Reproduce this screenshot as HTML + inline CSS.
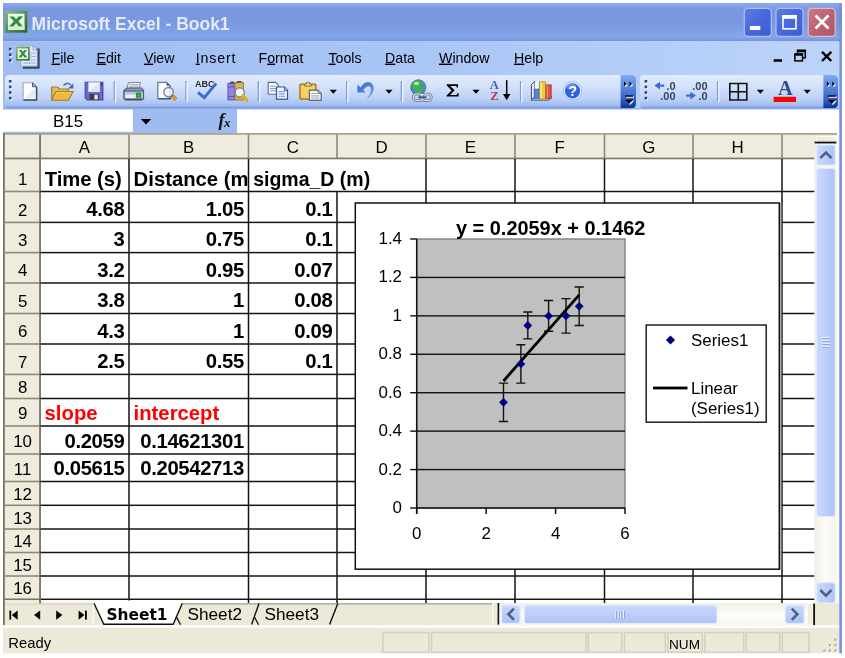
<!DOCTYPE html>
<html><head><meta charset="utf-8"><title>Microsoft Excel - Book1</title>
<style>
html,body{margin:0;padding:0;background:#fff;}
body{width:845px;height:658px;overflow:hidden;position:relative;}
svg{position:absolute;left:0;top:0;display:block;}
text{font-family:"Liberation Sans",Arial,sans-serif;}
.b{font-weight:bold;}
.dv{font-family:"DejaVu Sans Condensed","DejaVu Sans","Liberation Sans",sans-serif;}
</style></head><body>
<svg width="845" height="658" viewBox="0 0 845 658">
<defs>
<filter id="soft" filterUnits="userSpaceOnUse" x="0" y="0" width="845" height="658" color-interpolation-filters="sRGB"><feGaussianBlur stdDeviation="0.45"/></filter>
<linearGradient id="gTitle" x1="0" y1="0" x2="0" y2="1">
<stop offset="0" stop-color="#8aabea"/><stop offset="0.06" stop-color="#86a6e8"/><stop offset="0.15" stop-color="#7b98df"/><stop offset="0.5" stop-color="#7a97df"/><stop offset="0.66" stop-color="#7d9ee3"/><stop offset="0.88" stop-color="#82a9e9"/><stop offset="0.935" stop-color="#7d9ce3"/><stop offset="1" stop-color="#7a8fdc"/>
</linearGradient>
<linearGradient id="gMenu" x1="0" y1="0" x2="1" y2="0">
<stop offset="0" stop-color="#a0bdf2"/><stop offset="0.5" stop-color="#aac6f6"/><stop offset="0.75" stop-color="#b3cdf8"/><stop offset="1" stop-color="#bdd4f9"/>
</linearGradient>
<linearGradient id="gTb" x1="0" y1="0" x2="0" y2="1">
<stop offset="0" stop-color="#e1ebfc"/><stop offset="0.35" stop-color="#d3e1fa"/><stop offset="0.7" stop-color="#bdd2f6"/><stop offset="0.9" stop-color="#a2bdf0"/><stop offset="0.95" stop-color="#8eabe8"/><stop offset="1" stop-color="#5f82d4"/>
</linearGradient>
<linearGradient id="gOv" x1="0" y1="0" x2="0" y2="1">
<stop offset="0" stop-color="#7eaaee"/><stop offset="0.4" stop-color="#5583da"/><stop offset="0.75" stop-color="#2f5cc0"/><stop offset="0.95" stop-color="#0d3aa0"/><stop offset="1" stop-color="#0a2a8c"/>
</linearGradient>
<linearGradient id="gBtn" x1="0" y1="0" x2="1" y2="1">
<stop offset="0" stop-color="#5d7de6"/><stop offset="0.5" stop-color="#4868dc"/><stop offset="1" stop-color="#3c5cd2"/>
</linearGradient>
<linearGradient id="gCls" x1="0" y1="0" x2="1" y2="1">
<stop offset="0" stop-color="#c87a8c"/><stop offset="0.5" stop-color="#bb6476"/><stop offset="1" stop-color="#ae5668"/>
</linearGradient>
<linearGradient id="gSbV" x1="0" y1="0" x2="1" y2="0">
<stop offset="0" stop-color="#c9d8fb"/><stop offset="0.5" stop-color="#bccefa"/><stop offset="1" stop-color="#aec2f6"/>
</linearGradient>
<linearGradient id="gSbH" x1="0" y1="0" x2="0" y2="1">
<stop offset="0" stop-color="#c9d8fb"/><stop offset="0.5" stop-color="#bccefa"/><stop offset="1" stop-color="#aec2f6"/>
</linearGradient>
<linearGradient id="gTrV" x1="0" y1="0" x2="1" y2="0">
<stop offset="0" stop-color="#f0efe6"/><stop offset="0.5" stop-color="#fcfcf9"/><stop offset="1" stop-color="#f6f5ee"/>
</linearGradient>
<linearGradient id="gTrH" x1="0" y1="0" x2="0" y2="1">
<stop offset="0" stop-color="#f0efe6"/><stop offset="0.5" stop-color="#fcfcf9"/><stop offset="1" stop-color="#f6f5ee"/>
</linearGradient>
</defs>

<g filter="url(#soft)">
<rect x="0" y="0" width="845" height="658" fill="#fff"/>
<rect x="3" y="3" width="839" height="38.5" fill="url(#gTitle)"/>
<rect x="838.8" y="3" width="3.2" height="38.5" fill="#7585dc" opacity="0.55"/>
<linearGradient id="gIco" x1="0" y1="0" x2="1" y2="1"><stop offset="0" stop-color="#8cc07a"/><stop offset="0.5" stop-color="#4f9348"/><stop offset="1" stop-color="#2a6428"/></linearGradient>
<g transform="translate(5.2,10.9)"><rect x="0" y="0" width="22.1" height="21.8" fill="url(#gIco)"/><rect x="2.8" y="2.8" width="16.5" height="16.2" fill="#eff6ec"/><rect x="2.8" y="14.5" width="16.5" height="4.5" fill="#dcecd6"/><path d="M4.2 5.6 L8.6 5.6 L11 8.4 L13.6 5.6 L17.8 5.6 L13.2 10.4 L17.6 15.4 L13.2 15.4 L10.8 12.4 L8.2 15.4 L4.2 15.4 L8.6 10.4 Z" fill="#2f9440"/><path d="M13.6 5.6 L17.8 5.6 L4.2 15.4 L8.2 15.4 Z" fill="#1f7a30" opacity="0.55"/></g>
<text x="31.6" y="29.6" font-size="17.6" class="b" fill="#e3ebfc" textLength="198" lengthAdjust="spacingAndGlyphs">Microsoft Excel - Book1</text>
<rect x="744.3" y="8.3" width="27" height="28" rx="3.5" fill="url(#gBtn)" stroke="#a9bdf3" stroke-width="1.3"/>
<rect x="776" y="8.3" width="27" height="28" rx="3.5" fill="url(#gBtn)" stroke="#a9bdf3" stroke-width="1.3"/>
<rect x="808.2" y="8.3" width="27" height="28" rx="3.5" fill="url(#gCls)" stroke="#e0b9c4" stroke-width="1.3"/>
<rect x="749.8" y="26" width="10.5" height="4" fill="#fff"/>
<rect x="783" y="15.8" width="13" height="13" fill="none" stroke="#fff" stroke-width="1.6"/><rect x="782.2" y="15" width="14.6" height="3.8" fill="#fff"/>
<path d="M815.5 15.5 L828.5 28.5 M828.5 15.5 L815.5 28.5" stroke="#fff" stroke-width="2.6" stroke-linecap="butt"/>
<rect x="3" y="41.5" width="836.5" height="33.5" fill="url(#gMenu)"/>
<rect x="9.9" y="48.8" width="2.6" height="2.6" fill="#f4f8ff"/><rect x="8.9" y="47.8" width="2.6" height="2.6" fill="#2c418c"/>
<rect x="9.9" y="54.4" width="2.6" height="2.6" fill="#f4f8ff"/><rect x="8.9" y="53.4" width="2.6" height="2.6" fill="#2c418c"/>
<rect x="9.9" y="60.1" width="2.6" height="2.6" fill="#f4f8ff"/><rect x="8.9" y="59.1" width="2.6" height="2.6" fill="#2c418c"/>
<g><path d="M23 48.5 H39.7 V68.8 H23 Z" fill="#3b4a68"/><path d="M20.8 45.8 H33.2 L37.2 49.8 V66.2 H20.8 Z" fill="#dfe9f9" stroke="#8ea2c8" stroke-width="0.8"/><path d="M33.2 45.8 V49.8 H37.2 Z" fill="#f7faff" stroke="#7b8eb4" stroke-width="0.8"/><path d="M30.5 53 h5 M30.5 56.5 h5 M30.5 60 h5 M23.5 63.2 h12" stroke="#9db4e0" stroke-width="1.2"/><path d="M31 52 V64" stroke="#b9caea" stroke-width="1"/><rect x="16" y="46.8" width="13.7" height="13.8" fill="url(#gIco)"/><rect x="17.6" y="48.4" width="10.5" height="10.6" fill="#eaf4e6"/><path d="M18.8 50 L21.6 50 L22.9 51.9 L24.4 50 L27.2 50 L24.3 53.5 L27.3 57.4 L24.4 57.4 L22.9 55.3 L21.4 57.4 L18.6 57.4 L21.5 53.5 Z" fill="#2f9440"/></g>
<text x="51.5" y="62.6" font-size="14.2" fill="#000"><tspan text-decoration="underline">F</tspan>ile</text>
<text x="96.5" y="62.6" font-size="14.2" fill="#000"><tspan text-decoration="underline">E</tspan>dit</text>
<text x="144" y="62.6" font-size="14.2" fill="#000"><tspan text-decoration="underline">V</tspan>iew</text>
<text x="195.8" y="62.6" font-size="14.2" fill="#000" textLength="39.6" lengthAdjust="spacing"><tspan text-decoration="underline">I</tspan>nsert</text>
<text x="258.5" y="62.6" font-size="14.2" fill="#000">F<tspan text-decoration="underline">o</tspan>rmat</text>
<text x="328.5" y="62.6" font-size="14.2" fill="#000"><tspan text-decoration="underline">T</tspan>ools</text>
<text x="385" y="62.6" font-size="14.2" fill="#000"><tspan text-decoration="underline">D</tspan>ata</text>
<text x="439" y="62.6" font-size="14.2" fill="#000"><tspan text-decoration="underline">W</tspan>indow</text>
<text x="514" y="62.6" font-size="14.2" fill="#000"><tspan text-decoration="underline">H</tspan>elp</text>
<rect x="773.7" y="59.2" width="8.3" height="2.6" fill="#000"/>
<path d="M797.5 53 V50.3 H805.3 V57.8 H802.5" fill="none" stroke="#000" stroke-width="1.5"/><rect x="794.9" y="53.9" width="7.6" height="7" fill="none" stroke="#000" stroke-width="1.5"/><path d="M797 51.2H805.3M794.5 54.7H802.6" stroke="#000" stroke-width="2"/>
<path d="M822 51.8 L831.3 61 M831.3 51.8 L822 61" stroke="#000" stroke-width="2.4"/>
<rect x="3" y="75" width="836.5" height="34" fill="#a9c2f2"/>
<rect x="3" y="75" width="836.5" height="34" fill="url(#gMenu)"/>
<path d="M9 75 H621 V108.6 H9 Q5 108.6 5 104 V79 Q5 75 9 75 Z" fill="url(#gTb)"/>
<path d="M620.6 75 H631 Q636 75 636 80 V103.6 Q636 108.6 631 108.6 H620.6 Z" fill="url(#gOv)"/>
<path d="M644 75 H824 V108.6 H644 Q640 108.6 640 104 V79 Q640 75 644 75 Z" fill="url(#gTb)"/>
<path d="M823.4 75 H833 Q838 75 838 80 V103.6 Q838 108.6 833 108.6 H823.4 Z" fill="url(#gOv)"/>
<rect x="9.9" y="81.0" width="2.6" height="2.6" fill="#f4f8ff"/><rect x="8.9" y="80.0" width="2.6" height="2.6" fill="#2c418c"/>
<rect x="9.9" y="86.6" width="2.6" height="2.6" fill="#f4f8ff"/><rect x="8.9" y="85.6" width="2.6" height="2.6" fill="#2c418c"/>
<rect x="9.9" y="92.2" width="2.6" height="2.6" fill="#f4f8ff"/><rect x="8.9" y="91.2" width="2.6" height="2.6" fill="#2c418c"/>
<rect x="9.9" y="97.8" width="2.6" height="2.6" fill="#f4f8ff"/><rect x="8.9" y="96.8" width="2.6" height="2.6" fill="#2c418c"/>
<rect x="645.6" y="81.0" width="2.6" height="2.6" fill="#f4f8ff"/><rect x="644.6" y="80.0" width="2.6" height="2.6" fill="#2c418c"/>
<rect x="645.6" y="86.6" width="2.6" height="2.6" fill="#f4f8ff"/><rect x="644.6" y="85.6" width="2.6" height="2.6" fill="#2c418c"/>
<rect x="645.6" y="92.2" width="2.6" height="2.6" fill="#f4f8ff"/><rect x="644.6" y="91.2" width="2.6" height="2.6" fill="#2c418c"/>
<rect x="645.6" y="97.8" width="2.6" height="2.6" fill="#f4f8ff"/><rect x="644.6" y="96.8" width="2.6" height="2.6" fill="#2c418c"/>
<path d="M625 82.5 l2.7 2.4 l-2.7 2.4 z M630.4 82.5 l2.7 2.4 l-2.7 2.4 z" fill="#fff"/>
<rect x="626" y="96.4" width="8" height="1.3" fill="#fff"/><path d="M626 100.8 h8 l-4 4.3 z" fill="#fff"/>
<path d="M624 81.5 l2.7 2.4 l-2.7 2.4 z M629.4 81.5 l2.7 2.4 l-2.7 2.4 z" fill="#000"/>
<rect x="625" y="95.4" width="8" height="1.3" fill="#000"/><path d="M625 99.8 h8 l-4 4.3 z" fill="#000"/>
<path d="M827.8 82.5 l2.7 2.4 l-2.7 2.4 z M833.1999999999999 82.5 l2.7 2.4 l-2.7 2.4 z" fill="#fff"/>
<rect x="828.8" y="96.4" width="8" height="1.3" fill="#fff"/><path d="M828.8 100.8 h8 l-4 4.3 z" fill="#fff"/>
<path d="M826.8 81.5 l2.7 2.4 l-2.7 2.4 z M832.1999999999999 81.5 l2.7 2.4 l-2.7 2.4 z" fill="#000"/>
<rect x="827.8" y="95.4" width="8" height="1.3" fill="#000"/><path d="M827.8 99.8 h8 l-4 4.3 z" fill="#000"/>
<rect x="113.6" y="81" width="1.3" height="20.5" fill="#7c9be0"/><rect x="114.89999999999999" y="82" width="1.2" height="20.5" fill="#f4f8fe"/>
<rect x="185.3" y="81" width="1.3" height="20.5" fill="#7c9be0"/><rect x="186.6" y="82" width="1.2" height="20.5" fill="#f4f8fe"/>
<rect x="257.7" y="81" width="1.3" height="20.5" fill="#7c9be0"/><rect x="259.0" y="82" width="1.2" height="20.5" fill="#f4f8fe"/>
<rect x="346.0" y="81" width="1.3" height="20.5" fill="#7c9be0"/><rect x="347.3" y="82" width="1.2" height="20.5" fill="#f4f8fe"/>
<rect x="400.7" y="81" width="1.3" height="20.5" fill="#7c9be0"/><rect x="402.0" y="82" width="1.2" height="20.5" fill="#f4f8fe"/>
<rect x="519.9" y="81" width="1.3" height="20.5" fill="#7c9be0"/><rect x="521.2" y="82" width="1.2" height="20.5" fill="#f4f8fe"/>
<rect x="716.9" y="81" width="1.3" height="20.5" fill="#7c9be0"/><rect x="718.2" y="82" width="1.2" height="20.5" fill="#f4f8fe"/>
<path d="M329.7 89.7 h7.2 l-3.6 4 z" fill="#000"/>
<path d="M385.4 89.7 h7.2 l-3.6 4 z" fill="#000"/>
<path d="M472.4 89.7 h7.2 l-3.6 4 z" fill="#000"/>
<path d="M756.8 89.7 h7.2 l-3.6 4 z" fill="#000"/>
<path d="M803.6 89.7 h7.2 l-3.6 4 z" fill="#000"/>
<g transform="translate(22.3,82)"><path d="M0.8 0.8 H10.2 L14.2 4.8 V17.8 H0.8 Z" fill="#fdfdff" stroke="#9aa8c4" stroke-width="1.1"/><path d="M14.3 5 V18 H1.2" fill="none" stroke="#3b4a6e" stroke-width="1.5"/><path d="M10.2 0.8 V4.8 H14.2 Z" fill="#b9c6e0" stroke="#4a5a80" stroke-width="1"/><path d="M3 15.5 L12.5 6 V16 H3Z" fill="#dfe5f2" opacity="0.8"/></g>
<g transform="translate(51,81)"><path d="M0.8 6 H6.5 L8.5 8 H17.5 V19 H0.8 Z" fill="#e9bb55" stroke="#9a7a3a" stroke-width="1.2"/><path d="M0.8 19 L5 10.5 H22 L17.5 19 Z" fill="#f7cf5e" stroke="#a07c30" stroke-width="1.2"/><path d="M2.5 18.2 L6 12 H20 L17 18.2 Z" fill="#f2b936"/><path d="M12.5 4.5 Q16 0.5 20 4" fill="none" stroke="#5c78b0" stroke-width="1.6"/><path d="M22.3 2.2 V7.6 H17 Z" fill="#4a68a8"/></g>
<g transform="translate(84.6,81.7)"><path d="M0.6 0.6 H18.3 V18.3 H2.6 L0.6 16.3 Z" fill="#6b67d4" stroke="#4541a4" stroke-width="1.1"/><rect x="3.8" y="0.6" width="11.5" height="9.6" fill="#f4f6fb"/><path d="M3.8 10.2 L15.3 0.6 V10.2 Z" fill="#d5dbea" opacity="0.7"/><rect x="5" y="12.2" width="9.5" height="6" fill="#3a3a4c"/><rect x="9.8" y="13" width="3.4" height="4.6" fill="#e8e8f0"/><rect x="16.3" y="1.8" width="1.2" height="1.8" fill="#26235f"/></g>
<g transform="translate(123,81.5)"><path d="M5.5 1 H17.5 L15.5 8 H3.5 Z" fill="#f4f6fb" stroke="#7c879c" stroke-width="1"/><path d="M6.5 3.2 H15.6 M5.8 5.4 H15" stroke="#8d97ab" stroke-width="1"/><path d="M1 9 L4 6.5 H18.5 L20.5 9 V17 H1 Z" fill="#8f9cb5" stroke="#4d5a74" stroke-width="1.1"/><rect x="1" y="9.5" width="19.5" height="8" fill="#b9c3d6" stroke="#4d5a74" stroke-width="1.1"/><rect x="2.5" y="13" width="10" height="3.6" fill="#eef1f7"/><rect x="13.6" y="11.6" width="4" height="4" fill="#18c834" stroke="#0b7a1c" stroke-width="0.8"/><path d="M2 18.3 H19.5" stroke="#3f4a62" stroke-width="1.4"/></g>
<g transform="translate(157,81.5)"><path d="M0.8 0.8 H9.5 L13 4.3 V17 H0.8 Z" fill="#fbfcfe" stroke="#66759a" stroke-width="1.2"/><path d="M13.2 5 V17.4 H1.2" fill="none" stroke="#3b4a6e" stroke-width="1.3"/><path d="M9.5 0.8 V4.3 H13 Z" fill="#4a5c8a"/><circle cx="11.6" cy="10.6" r="4.7" fill="#eef4fc" fill-opacity="0.92" stroke="#7e8797" stroke-width="1.5"/><path d="M14.6 13.8 L16 15.2" stroke="#6c6f78" stroke-width="2.2"/><path d="M17.2 13.6 L20 16.6 L17.6 19.4 L14.6 16.4 Z" fill="#e79a2b" stroke="#b87514" stroke-width="0.6"/></g>
<text x="195" y="87" font-size="8.6" font-weight="bold" fill="#2b2b2b" textLength="19.5" lengthAdjust="spacingAndGlyphs">ABC</text>
<path d="M198 92.3 L204.3 97.6 L216.2 83.4" fill="none" stroke="#3c6bd9" stroke-width="3" stroke-linejoin="miter"/>
<g transform="translate(227.3,81)"><rect x="0.6" y="2.5" width="6.8" height="16.5" fill="#8f84e4" stroke="#5d52b5" stroke-width="0.9"/><path d="M0.6 6h6.8M0.6 15.5h6.8" stroke="#5d52b5" stroke-width="1"/><path d="M1.5 2.5 L3.5 0.6 H6.4 L7.4 2.5" fill="#4e4e62"/><rect x="7.6" y="1.6" width="8.6" height="17.4" fill="#dbb548" stroke="#9a7c2a" stroke-width="0.9"/><path d="M8.4 1.6 L10 0 H13.5 L15.5 1.6" fill="#4e4e62"/><circle cx="12.4" cy="11.4" r="4.6" fill="#eef4fc" stroke="#7e8797" stroke-width="1.4"/><path d="M15.6 14.8 L19.6 19.4" stroke="#e3ab2e" stroke-width="3.4" stroke-linecap="round"/></g>
<g transform="translate(267.5,81.7)"><path d="M0.7 0.7 H8 L11 3.7 V12.5 H0.7 Z" fill="#fafcff" stroke="#5a6a8e" stroke-width="1.1"/><path d="M2.6 4.5h5.5M2.6 6.8h6.5M2.6 9.1h6.5" stroke="#7d95c8" stroke-width="1.1"/><path d="M9 5.3 H16.8 L20 8.5 V17.4 H9 Z" fill="#fafcff" stroke="#2f4f9a" stroke-width="1.2"/><path d="M16.8 5.3 V8.5 H20" fill="#c5d3ee" stroke="#2f4f9a" stroke-width="1"/><path d="M11 10h6.8M11 12.3h6.8M11 14.6h6.8" stroke="#6c89c8" stroke-width="1.1"/></g>
<g transform="translate(299.2,81.5)"><rect x="0.7" y="2.6" width="16" height="15" rx="1" fill="#f0bf3e" stroke="#9a6f22" stroke-width="1.2"/><rect x="2.2" y="4.2" width="13" height="12" fill="#f6d162"/><path d="M5.4 4.6 V2.6 H7.4 V0.8 H10.4 V2.6 H12.4 V4.6 Z" fill="#e8dca0" stroke="#8a6a28" stroke-width="0.9"/><path d="M10.2 8.7 H18.8 L22 11.9 V18.8 H10.2 Z" fill="#f4f6fa" stroke="#5e6470" stroke-width="1.2"/><path d="M12 12h5.6M12 14.4h8.2M12 16.6h8.2" stroke="#9aa3b5" stroke-width="1"/><path d="M18.8 8.7 V11.9 H22" fill="#cfd5e2" stroke="#5e6470" stroke-width="0.9"/></g>
<linearGradient id="gUndo" x1="0" y1="0" x2="1" y2="1"><stop offset="0" stop-color="#3468d6"/><stop offset="0.6" stop-color="#5486e4"/><stop offset="1" stop-color="#9ab8f0"/></linearGradient>
<path d="M357.4 84.6 L357.4 92.6 L365.8 92.6 L363.4 90.2 Q365.6 86.6 368.8 86.3 Q371.2 86.8 371 90 Q370.4 94.6 366.4 99.3 Q373.6 94.6 373.8 88.6 Q373.4 82.2 368 81.9 Q363.6 82.3 360.6 87.6 Z" fill="url(#gUndo)"/>
<g><circle cx="418.3" cy="87.4" r="7.6" fill="#4a82de" stroke="#3a64b4" stroke-width="0.8"/><path d="M412 84.6 Q413.6 81 418 80.2 Q422.6 80.4 423 83 Q420.6 84.6 420.4 87 Q422.6 89.4 421.4 92.6 Q418.6 95 416 93.4 Q415.6 90 413 89 Q411.4 87 412 84.6Z" fill="#3bb54a"/><path d="M423.6 84.4 Q426 86.6 425.6 90.6 Q424.4 92 423.4 90 Q423 87 423.6 84.4Z" fill="#3bb54a"/><ellipse cx="416.4" cy="83.4" rx="2.6" ry="1.7" fill="#d8f7d4" opacity="0.85"/><rect x="413.1" y="94" width="10" height="6.6" rx="3.3" fill="none" stroke="#68748e" stroke-width="2.6"/><rect x="421.4" y="94" width="10" height="6.6" rx="3.3" fill="none" stroke="#68748e" stroke-width="2.6"/><rect x="413.1" y="94" width="10" height="6.6" rx="3.3" fill="none" stroke="#f2f5fa" stroke-width="1"/><rect x="421.4" y="94" width="10" height="6.6" rx="3.3" fill="none" stroke="#f2f5fa" stroke-width="1"/><path d="M418.4 97.3 H426.4" stroke="#4d586e" stroke-width="2"/></g>
<path d="M446.6 84.2 H458 V87.4 H456.8 L456.3 85.9 H450.2 L454.6 90.3 L450 95 H456.6 L457.4 93.2 H458.6 V96.6 H446.6 V95.6 L451.6 90.4 L446.6 85.3 Z" fill="#000"/>
<text x="494.4" y="89.4" font-size="12.6" font-weight="bold" text-anchor="middle" fill="#3c62bc" style="font-family:'Liberation Serif',serif">A</text>
<text x="494.4" y="100.4" font-size="12.6" font-weight="bold" text-anchor="middle" fill="#b03c4c" style="font-family:'Liberation Serif',serif">Z</text>
<path d="M506.7 80.2 V97" stroke="#000" stroke-width="1.5"/><path d="M503 94 H510.4 L506.7 100.2 Z" fill="#000"/>
<g transform="translate(530.4,80.5)"><path d="M1 4 L4.5 0.8 V16 L1 19.6 Z" fill="#e6ebf5" stroke="#3b4a78" stroke-width="1"/><path d="M4.5 1 H8 V16 H4.5Z" fill="#f5f7fb"/><path d="M1 19.6 L4.5 16.2 H21 L18.5 19.6 Z" fill="#eef1f7" stroke="#3b4a78" stroke-width="1"/><rect x="3.8" y="8.6" width="4.8" height="9.4" fill="#4f86e2" stroke="#2f5cb4" stroke-width="0.7"/><rect x="9.2" y="1.4" width="6" height="17" fill="#f0cc3a" stroke="#a8861c" stroke-width="0.7"/><rect x="15.6" y="4.4" width="5.2" height="13.8" fill="#e0523a" stroke="#9a2c1c" stroke-width="0.7"/><rect x="10" y="2" width="1.6" height="15.6" fill="#fbeea0" opacity="0.8"/><rect x="16.2" y="5" width="1.4" height="12.6" fill="#f29a88" opacity="0.8"/></g>
<circle cx="572.5" cy="90.8" r="9.2" fill="#e9f0fd" stroke="#9cb6ee" stroke-width="0.9"/><circle cx="572.5" cy="90.8" r="7.6" fill="#2c62e4"/><ellipse cx="571.5" cy="86.6" rx="5" ry="3" fill="#6d9af2" opacity="0.75"/><text x="572.6" y="96.2" font-size="14.5" font-weight="bold" text-anchor="middle" fill="#fff">?</text>
<text x="675.6" y="89.6" font-size="11" font-weight="bold" text-anchor="end" fill="#36425e">.0</text>
<text x="675.6" y="99.6" font-size="11" font-weight="bold" text-anchor="end" fill="#36425e">.00</text>
<path d="M654.4 85.6 L660 81.8 V84.6 H664.2 V86.8 H660 V89.6 Z" fill="#3b6bd4"/>
<text x="707.6" y="89.6" font-size="11" font-weight="bold" text-anchor="end" fill="#36425e">.00</text>
<text x="707.6" y="99.6" font-size="11" font-weight="bold" text-anchor="end" fill="#36425e">.0</text>
<path d="M696 95.6 L690.4 91.8 V94.6 H686.2 V96.8 H690.4 V99.6 Z" fill="#3b6bd4"/>
<path d="M729.8 83.5 H746.8 V100 H729.8 Z M738.3 83.5 V100 M729.8 91.75 H746.8" fill="none" stroke="#111" stroke-width="1.6"/>
<text x="785.4" y="95.2" font-size="20.5" font-weight="bold" text-anchor="middle" fill="#2d4d8e" style="font-family:'Liberation Serif',serif">A</text>
<rect x="773.6" y="96.8" width="22.4" height="5.2" fill="#ff0000"/>
<rect x="3" y="108.6" width="836.5" height="25" fill="#fff"/>
<rect x="3" y="108.2" width="836.5" height="1.2" fill="#86a4e4"/>
<rect x="133" y="109" width="104" height="23.5" fill="#9fbbf0"/>
<rect x="3" y="131.8" width="234" height="1.6" fill="#9fbbf0"/>
<text x="53" y="126.8" font-size="16.9" fill="#000">B15</text>
<path d="M140.8 118.9 h10.4 l-5.2 5.5 z" fill="#000"/>
<text x="218.6" y="126.4" font-size="18" fill="#111" font-style="italic" font-weight="bold" style="font-family:'Liberation Serif',serif">f<tspan font-size="13" dy="0.6" dx="-0.6">x</tspan></text>
<rect x="3" y="133.2" width="812" height="25.3" fill="#efebde"/>
<rect x="3" y="133.2" width="37" height="468" fill="#efebde"/>
<rect x="40" y="158.5" width="775" height="442.5" fill="#fff"/>
<rect x="3" y="133" width="812" height="1.8" fill="#a9a68f"/>
<rect x="3" y="133" width="1.8" height="468" fill="#77755f"/>
<rect x="128.2" y="134.5" width="1.6" height="24" fill="#8d8a73"/>
<rect x="247.7" y="134.5" width="1.6" height="24" fill="#8d8a73"/>
<rect x="336.2" y="134.5" width="1.6" height="24" fill="#8d8a73"/>
<rect x="425.2" y="134.5" width="1.6" height="24" fill="#8d8a73"/>
<rect x="514.2" y="134.5" width="1.6" height="24" fill="#8d8a73"/>
<rect x="603.7" y="134.5" width="1.6" height="24" fill="#8d8a73"/>
<rect x="692.2" y="134.5" width="1.6" height="24" fill="#8d8a73"/>
<rect x="781.2" y="134.5" width="1.6" height="24" fill="#8d8a73"/>
<rect x="4.5" y="190.7" width="35.5" height="1.6" fill="#8d8a73"/>
<rect x="4.5" y="221.6" width="35.5" height="1.6" fill="#8d8a73"/>
<rect x="4.5" y="251.79999999999998" width="35.5" height="1.6" fill="#8d8a73"/>
<rect x="4.5" y="282.2" width="35.5" height="1.6" fill="#8d8a73"/>
<rect x="4.5" y="312.7" width="35.5" height="1.6" fill="#8d8a73"/>
<rect x="4.5" y="343.2" width="35.5" height="1.6" fill="#8d8a73"/>
<rect x="4.5" y="373.59999999999997" width="35.5" height="1.6" fill="#8d8a73"/>
<rect x="4.5" y="397.7" width="35.5" height="1.6" fill="#8d8a73"/>
<rect x="4.5" y="425.2" width="35.5" height="1.6" fill="#8d8a73"/>
<rect x="4.5" y="453.2" width="35.5" height="1.6" fill="#8d8a73"/>
<rect x="4.5" y="480.7" width="35.5" height="1.6" fill="#8d8a73"/>
<rect x="4.5" y="504.5" width="35.5" height="1.6" fill="#8d8a73"/>
<rect x="4.5" y="528.2" width="35.5" height="1.6" fill="#8d8a73"/>
<rect x="4.5" y="551.7" width="35.5" height="1.6" fill="#8d8a73"/>
<rect x="4.5" y="575.2" width="35.5" height="1.6" fill="#8d8a73"/>
<rect x="4.5" y="598.5" width="35.5" height="1.6" fill="#77755f"/>
<rect x="39.2" y="134.5" width="1.7" height="466" fill="#6f6d58"/>
<rect x="4.5" y="157.6" width="810" height="1.7" fill="#7d7b65"/>
<rect x="40.5" y="190.75" width="774" height="1.5" fill="#141414"/>
<rect x="40.5" y="221.65" width="774" height="1.5" fill="#141414"/>
<rect x="40.5" y="251.85" width="774" height="1.5" fill="#141414"/>
<rect x="40.5" y="282.25" width="774" height="1.5" fill="#141414"/>
<rect x="40.5" y="312.75" width="774" height="1.5" fill="#141414"/>
<rect x="40.5" y="343.25" width="774" height="1.5" fill="#141414"/>
<rect x="40.5" y="373.65" width="774" height="1.5" fill="#141414"/>
<rect x="40.5" y="397.75" width="774" height="1.5" fill="#141414"/>
<rect x="40.5" y="425.25" width="774" height="1.5" fill="#141414"/>
<rect x="40.5" y="453.25" width="774" height="1.5" fill="#141414"/>
<rect x="40.5" y="480.75" width="774" height="1.5" fill="#141414"/>
<rect x="40.5" y="504.55" width="774" height="1.5" fill="#141414"/>
<rect x="40.5" y="528.25" width="774" height="1.5" fill="#141414"/>
<rect x="40.5" y="551.75" width="774" height="1.5" fill="#141414"/>
<rect x="40.5" y="575.25" width="774" height="1.5" fill="#141414"/>
<rect x="40.5" y="598.55" width="774" height="1.5" fill="#141414"/>
<rect x="128.25" y="159" width="1.5" height="444" fill="#141414"/>
<rect x="247.75" y="159" width="1.5" height="444" fill="#141414"/>
<rect x="336.25" y="191.5" width="1.5" height="411.5" fill="#141414"/>
<rect x="425.25" y="159" width="1.5" height="444" fill="#141414"/>
<rect x="514.25" y="159" width="1.5" height="444" fill="#141414"/>
<rect x="603.75" y="159" width="1.5" height="444" fill="#141414"/>
<rect x="692.25" y="159" width="1.5" height="444" fill="#141414"/>
<rect x="781.25" y="159" width="1.5" height="444" fill="#141414"/>
<text x="84.5" y="153" font-size="16.9" text-anchor="middle" fill="#000">A</text>
<text x="188.75" y="153" font-size="16.9" text-anchor="middle" fill="#000">B</text>
<text x="292.75" y="153" font-size="16.9" text-anchor="middle" fill="#000">C</text>
<text x="381.5" y="153" font-size="16.9" text-anchor="middle" fill="#000">D</text>
<text x="470.5" y="153" font-size="16.9" text-anchor="middle" fill="#000">E</text>
<text x="559.75" y="153" font-size="16.9" text-anchor="middle" fill="#000">F</text>
<text x="648.75" y="153" font-size="16.9" text-anchor="middle" fill="#000">G</text>
<text x="737.5" y="153" font-size="16.9" text-anchor="middle" fill="#000">H</text>
<text x="22.6" y="185.3" font-size="16.9" text-anchor="middle" fill="#000">1</text>
<text x="22.6" y="215.6" font-size="16.9" text-anchor="middle" fill="#000">2</text>
<text x="22.6" y="245.8" font-size="16.9" text-anchor="middle" fill="#000">3</text>
<text x="22.6" y="276.2" font-size="16.9" text-anchor="middle" fill="#000">4</text>
<text x="22.6" y="306.7" font-size="16.9" text-anchor="middle" fill="#000">5</text>
<text x="22.6" y="337.2" font-size="16.9" text-anchor="middle" fill="#000">6</text>
<text x="22.6" y="367.6" font-size="16.9" text-anchor="middle" fill="#000">7</text>
<text x="22.6" y="393.4" font-size="16.9" text-anchor="middle" fill="#000">8</text>
<text x="22.6" y="419.2" font-size="16.9" text-anchor="middle" fill="#000">9</text>
<text x="22.6" y="447.2" font-size="16.9" text-anchor="middle" fill="#000">10</text>
<text x="22.6" y="474.7" font-size="16.9" text-anchor="middle" fill="#000">11</text>
<text x="22.6" y="500.2" font-size="16.9" text-anchor="middle" fill="#000">12</text>
<text x="22.6" y="523.9" font-size="16.9" text-anchor="middle" fill="#000">13</text>
<text x="22.6" y="547.4" font-size="16.9" text-anchor="middle" fill="#000">14</text>
<text x="22.6" y="570.9" font-size="16.9" text-anchor="middle" fill="#000">15</text>
<text x="22.6" y="594.2" font-size="16.9" text-anchor="middle" fill="#000">16</text>
<clipPath id="cB1"><rect x="129.8" y="159" width="118" height="32"/></clipPath>
<text x="44.8" y="186.1" font-size="20.3" class="b" fill="#000" textLength="77" lengthAdjust="spacing">Time (s)</text>
<g clip-path="url(#cB1)"><text x="133.6" y="186.1" font-size="20.3" class="b" fill="#000">Distance (m)</text></g>
<text x="253.2" y="186.1" font-size="20.3" class="b" fill="#000" textLength="117" lengthAdjust="spacingAndGlyphs">sigma_D (m)</text>
<text x="124.4" y="216.1" font-size="20.3" class="b" text-anchor="end" letter-spacing="-0.35" fill="#000">4.68</text>
<text x="243.9" y="216.1" font-size="20.3" class="b" text-anchor="end" letter-spacing="-0.35" fill="#000">1.05</text>
<text x="332.4" y="216.1" font-size="20.3" class="b" text-anchor="end" letter-spacing="-0.35" fill="#000">0.1</text>
<text x="124.4" y="246.3" font-size="20.3" class="b" text-anchor="end" letter-spacing="-0.35" fill="#000">3</text>
<text x="243.9" y="246.3" font-size="20.3" class="b" text-anchor="end" letter-spacing="-0.35" fill="#000">0.75</text>
<text x="332.4" y="246.3" font-size="20.3" class="b" text-anchor="end" letter-spacing="-0.35" fill="#000">0.1</text>
<text x="124.4" y="276.7" font-size="20.3" class="b" text-anchor="end" letter-spacing="-0.35" fill="#000">3.2</text>
<text x="243.9" y="276.7" font-size="20.3" class="b" text-anchor="end" letter-spacing="-0.35" fill="#000">0.95</text>
<text x="332.4" y="276.7" font-size="20.3" class="b" text-anchor="end" letter-spacing="-0.35" fill="#000">0.07</text>
<text x="124.4" y="307.2" font-size="20.3" class="b" text-anchor="end" letter-spacing="-0.35" fill="#000">3.8</text>
<text x="243.9" y="307.2" font-size="20.3" class="b" text-anchor="end" letter-spacing="-0.35" fill="#000">1</text>
<text x="332.4" y="307.2" font-size="20.3" class="b" text-anchor="end" letter-spacing="-0.35" fill="#000">0.08</text>
<text x="124.4" y="337.7" font-size="20.3" class="b" text-anchor="end" letter-spacing="-0.35" fill="#000">4.3</text>
<text x="243.9" y="337.7" font-size="20.3" class="b" text-anchor="end" letter-spacing="-0.35" fill="#000">1</text>
<text x="332.4" y="337.7" font-size="20.3" class="b" text-anchor="end" letter-spacing="-0.35" fill="#000">0.09</text>
<text x="124.4" y="368.1" font-size="20.3" class="b" text-anchor="end" letter-spacing="-0.35" fill="#000">2.5</text>
<text x="243.9" y="368.1" font-size="20.3" class="b" text-anchor="end" letter-spacing="-0.35" fill="#000">0.55</text>
<text x="332.4" y="368.1" font-size="20.3" class="b" text-anchor="end" letter-spacing="-0.35" fill="#000">0.1</text>
<text x="44.6" y="419.7" font-size="20.3" class="b" fill="#ff0000">slope</text>
<text x="133.6" y="419.7" font-size="20.3" class="b" fill="#ff0000">intercept</text>
<text x="124.4" y="447.7" font-size="20.3" class="b" text-anchor="end" letter-spacing="-0.35" fill="#000">0.2059</text>
<text x="243.9" y="447.7" font-size="20.3" class="b" text-anchor="end" letter-spacing="-0.35" fill="#000">0.14621301</text>
<text x="124.4" y="475.2" font-size="20.3" class="b" text-anchor="end" letter-spacing="-0.35" fill="#000">0.05615</text>
<text x="243.9" y="475.2" font-size="20.3" class="b" text-anchor="end" letter-spacing="-0.35" fill="#000">0.20542713</text>
<rect x="355.3" y="203" width="424" height="366.2" fill="#fff" stroke="#111" stroke-width="1.5"/>
<rect x="416.7" y="239" width="208.3" height="269" fill="#c0c0c0" stroke="#808080" stroke-width="1.4"/>
<rect x="410.2" y="507.30" width="6.5" height="1.4" fill="#111"/>
<text x="402" y="512.9" font-size="16.9" text-anchor="end" fill="#000">0</text>
<rect x="416.7" y="468.87" width="208.3" height="1.4" fill="#111"/>
<rect x="410.2" y="468.87" width="6.5" height="1.4" fill="#111"/>
<text x="402" y="474.5" font-size="16.9" text-anchor="end" fill="#000">0.2</text>
<rect x="416.7" y="430.44" width="208.3" height="1.4" fill="#111"/>
<rect x="410.2" y="430.44" width="6.5" height="1.4" fill="#111"/>
<text x="402" y="436.0" font-size="16.9" text-anchor="end" fill="#000">0.4</text>
<rect x="416.7" y="392.01" width="208.3" height="1.4" fill="#111"/>
<rect x="410.2" y="392.01" width="6.5" height="1.4" fill="#111"/>
<text x="402" y="397.6" font-size="16.9" text-anchor="end" fill="#000">0.6</text>
<rect x="416.7" y="353.59" width="208.3" height="1.4" fill="#111"/>
<rect x="410.2" y="353.59" width="6.5" height="1.4" fill="#111"/>
<text x="402" y="359.2" font-size="16.9" text-anchor="end" fill="#000">0.8</text>
<rect x="416.7" y="315.16" width="208.3" height="1.4" fill="#111"/>
<rect x="410.2" y="315.16" width="6.5" height="1.4" fill="#111"/>
<text x="402" y="320.8" font-size="16.9" text-anchor="end" fill="#000">1</text>
<rect x="416.7" y="276.73" width="208.3" height="1.4" fill="#111"/>
<rect x="410.2" y="276.73" width="6.5" height="1.4" fill="#111"/>
<text x="402" y="282.3" font-size="16.9" text-anchor="end" fill="#000">1.2</text>
<rect x="410.2" y="238.30" width="6.5" height="1.4" fill="#111"/>
<text x="402" y="243.9" font-size="16.9" text-anchor="end" fill="#000">1.4</text>
<rect x="415.95" y="239" width="1.5" height="275" fill="#111"/>
<rect x="416.7" y="507.25" width="208.3" height="1.5" fill="#111"/>
<rect x="415.95" y="508" width="1.5" height="6" fill="#111"/>
<text x="416.7" y="539.2" font-size="16.9" text-anchor="middle" fill="#000">0</text>
<rect x="485.38" y="508" width="1.5" height="6" fill="#111"/>
<text x="486.1" y="539.2" font-size="16.9" text-anchor="middle" fill="#000">2</text>
<rect x="554.82" y="508" width="1.5" height="6" fill="#111"/>
<text x="555.6" y="539.2" font-size="16.9" text-anchor="middle" fill="#000">4</text>
<rect x="624.25" y="508" width="1.5" height="6" fill="#111"/>
<text x="625.0" y="539.2" font-size="16.9" text-anchor="middle" fill="#000">6</text>
<path d="M579.2 287.0 V325.5 M574.6 287.0 h9.2 M574.6 325.5 h9.2" stroke="#111" stroke-width="1.4" fill="none"/>
<path d="M520.9 344.7 V383.1 M516.2 344.7 h9.2 M516.2 383.1 h9.2" stroke="#111" stroke-width="1.4" fill="none"/>
<path d="M527.8 312.0 V338.9 M523.2 312.0 h9.2 M523.2 338.9 h9.2" stroke="#111" stroke-width="1.4" fill="none"/>
<path d="M548.6 300.5 V331.2 M544.0 300.5 h9.2 M544.0 331.2 h9.2" stroke="#111" stroke-width="1.4" fill="none"/>
<path d="M566.0 298.6 V333.1 M561.4 298.6 h9.2 M561.4 333.1 h9.2" stroke="#111" stroke-width="1.4" fill="none"/>
<path d="M503.5 383.1 V421.5 M498.9 383.1 h9.2 M498.9 421.5 h9.2" stroke="#111" stroke-width="1.4" fill="none"/>
<path d="M503.5 381.0 L579.2 294.8" stroke="#000" stroke-width="2.8"/>
<path d="M579.2 301.9 l4.4 4.4 l-4.4 4.4 l-4.4 -4.4 z" fill="#000080"/>
<path d="M520.9 359.5 l4.4 4.4 l-4.4 4.4 l-4.4 -4.4 z" fill="#000080"/>
<path d="M527.8 321.1 l4.4 4.4 l-4.4 4.4 l-4.4 -4.4 z" fill="#000080"/>
<path d="M548.6 311.5 l4.4 4.4 l-4.4 4.4 l-4.4 -4.4 z" fill="#000080"/>
<path d="M566.0 311.5 l4.4 4.4 l-4.4 4.4 l-4.4 -4.4 z" fill="#000080"/>
<path d="M503.5 397.9 l4.4 4.4 l-4.4 4.4 l-4.4 -4.4 z" fill="#000080"/>
<text x="456" y="235.2" font-size="20.1" class="b" fill="#000" textLength="189.4" lengthAdjust="spacingAndGlyphs">y = 0.2059x + 0.1462</text>
<rect x="780" y="203" width="1.4" height="366.5" fill="#a8a8a8"/>
<rect x="646.2" y="325" width="120" height="97.2" fill="#fff" stroke="#111" stroke-width="1.4"/>
<path d="M670.5 335.4 l4.6 4.6 l-4.6 4.6 l-4.6 -4.6 z" fill="#000080"/>
<text x="691" y="345.6" font-size="16.9" fill="#000">Series1</text>
<rect x="653" y="386.6" width="34.5" height="2.8" fill="#000"/>
<text x="691" y="394" font-size="16.9" fill="#000">Linear</text>
<text x="691" y="414.3" font-size="16.9" fill="#000">(Series1)</text>
<rect x="814.6" y="134.8" width="24.9" height="468" fill="#efebde"/>
<rect x="815" y="144" width="22" height="459" fill="url(#gTrV)"/>
<rect x="814" y="133" width="23" height="1.8" fill="#a9a68f"/>
<rect x="816.5" y="136.5" width="19" height="5.2" fill="#efebde" stroke="#fbfaf5" stroke-width="1"/><rect x="814.6" y="141.6" width="22" height="1.8" fill="#111"/>
<rect x="816.6" y="145" width="18.6" height="20.2" rx="2.5" fill="url(#gSbV)" stroke="#e3ebfd" stroke-width="1.2"/>
<path d="M820.3 158.2 l5.6 -5.6 l5.6 5.6" fill="none" stroke="#4d6185" stroke-width="2.6"/>
<rect x="816.6" y="168.3" width="18.6" height="348.3" rx="2.5" fill="url(#gSbV)" stroke="#e3ebfd" stroke-width="1.2"/>
<rect x="821.7" y="336.8" width="8" height="1.3" fill="#eef3fe"/><rect x="822.4" y="337.9" width="8" height="1" fill="#8ca4dd"/>
<rect x="821.7" y="339.8" width="8" height="1.3" fill="#eef3fe"/><rect x="822.4" y="340.9" width="8" height="1" fill="#8ca4dd"/>
<rect x="821.7" y="342.8" width="8" height="1.3" fill="#eef3fe"/><rect x="822.4" y="343.9" width="8" height="1" fill="#8ca4dd"/>
<rect x="821.7" y="345.8" width="8" height="1.3" fill="#eef3fe"/><rect x="822.4" y="346.9" width="8" height="1" fill="#8ca4dd"/>
<rect x="816.6" y="582.6" width="18.6" height="20.5" rx="2.5" fill="url(#gSbV)" stroke="#e3ebfd" stroke-width="1.2"/>
<path d="M820.3 590 l5.6 5.6 l5.6 -5.6" fill="none" stroke="#4d6185" stroke-width="2.6"/>
<rect x="40.8" y="600" width="774" height="3.8" fill="#fff"/>
<rect x="40.8" y="600.2" width="52.5" height="3.4" fill="#f7f5ee"/>
<rect x="128.25" y="599" width="1.5" height="4.2" fill="#141414"/>
<rect x="247.75" y="599" width="1.5" height="4.2" fill="#141414"/>
<rect x="336.25" y="599" width="1.5" height="4.2" fill="#141414"/>
<rect x="425.25" y="599" width="1.5" height="4.2" fill="#141414"/>
<rect x="514.25" y="599" width="1.5" height="4.2" fill="#141414"/>
<rect x="603.75" y="599" width="1.5" height="4.2" fill="#141414"/>
<rect x="692.25" y="599" width="1.5" height="4.2" fill="#141414"/>
<rect x="781.25" y="599" width="1.5" height="4.2" fill="#141414"/>
<rect x="3" y="603.5" width="836.5" height="21.7" fill="#ece9d8"/>
<rect x="4.5" y="603.3" width="89" height="1.2" fill="#d3d0bf"/>
<rect x="181" y="603.2" width="311" height="1.3" fill="#a7a491"/>
<rect x="4.5" y="600" width="35" height="3.6" fill="#efebde"/><rect x="39.2" y="599" width="1.7" height="4.4" fill="#6f6d58"/>
<rect x="3" y="600" width="1.8" height="25" fill="#77755f"/>
<rect x="92.6" y="604" width="1.3" height="21" fill="#fbfaf5"/>
<rect x="9.4" y="610.6" width="1.8" height="9" fill="#000"/><path d="M17.6 610.4 v9.4 l-5.8 -4.7 z" fill="#000"/>
<path d="M40.2 610.4 v9.4 l-6.2 -4.7 z" fill="#000"/>
<path d="M56.2 610.4 v9.4 l6.2 -4.7 z" fill="#000"/>
<path d="M78.6 610.4 v9.4 l5.8 -4.7 z" fill="#000"/><rect x="85" y="610.6" width="1.8" height="9" fill="#000"/>
<path d="M93.8 600.5 L93.8 603.5 L103.8 624.6 H173 L182.2 603.5 L182.2 600.5 Z" fill="#fff"/>
<path d="M94 603.3 L103.8 624.3 H173.2 L182.3 603.3" fill="none" stroke="#111" stroke-width="1.4"/>
<path d="M251.6 624.6 L259 603.4" fill="none" stroke="#111" stroke-width="1.4"/>
<path d="M329.6 624.6 L337.8 603.4" fill="none" stroke="#111" stroke-width="1.4"/>
<path d="M176.2 616.6 L180.6 624.8 M254.4 617 L258.6 624.8" fill="none" stroke="#111" stroke-width="1.3"/>
<text x="106.5" y="619.6" font-size="15.2" class="b" fill="#000" textLength="61" lengthAdjust="spacingAndGlyphs" style="font-family:'DejaVu Sans',sans-serif">Sheet1</text>
<text x="187.5" y="619.6" font-size="17.2" fill="#000">Sheet2</text>
<text x="264.5" y="619.6" font-size="17.2" fill="#000">Sheet3</text>
<rect x="492.5" y="603" width="6.8" height="21.6" fill="#ece9d8"/><rect x="492" y="603" width="1.3" height="21.6" fill="#fbfaf5"/><rect x="497.6" y="603" width="1.8" height="21.6" fill="#111"/>
<rect x="499.5" y="603.6" width="308" height="21.6" fill="url(#gTrH)"/>
<rect x="501.5" y="605.2" width="18.6" height="18.4" rx="2.5" fill="url(#gSbH)" stroke="#e3ebfd" stroke-width="1.2"/>
<path d="M514 608.6 l-5.6 5.6 l5.6 5.6" fill="none" stroke="#4d6185" stroke-width="2.6"/>
<rect x="524.4" y="605.2" width="192.6" height="18.4" rx="2.5" fill="url(#gSbH)" stroke="#e3ebfd" stroke-width="1.2"/>
<rect x="615.3" y="610.2" width="1.1" height="8" fill="#eef3fe"/><rect x="616.2" y="610.9" width="0.9" height="8" fill="#8ca4dd"/>
<rect x="617.9" y="610.2" width="1.1" height="8" fill="#eef3fe"/><rect x="618.8" y="610.9" width="0.9" height="8" fill="#8ca4dd"/>
<rect x="620.5" y="610.2" width="1.1" height="8" fill="#eef3fe"/><rect x="621.4" y="610.9" width="0.9" height="8" fill="#8ca4dd"/>
<rect x="623.1" y="610.2" width="1.1" height="8" fill="#eef3fe"/><rect x="624.0" y="610.9" width="0.9" height="8" fill="#8ca4dd"/>
<rect x="785.2" y="605.2" width="19" height="18.4" rx="2.5" fill="url(#gSbH)" stroke="#e3ebfd" stroke-width="1.2"/>
<path d="M791.8 608.6 l5.6 5.6 l-5.6 5.6" fill="none" stroke="#4d6185" stroke-width="2.6"/>
<rect x="807.6" y="604" width="7.6" height="20.8" fill="#ece9d8"/><rect x="807.6" y="604" width="5.6" height="20.8" fill="#efede2" stroke="#fbfaf5" stroke-width="1"/><rect x="813.2" y="603.6" width="2" height="21.4" fill="#111"/>
<rect x="815.2" y="603.5" width="24.3" height="21.5" fill="#ece9d8"/>
<rect x="3" y="625" width="836.5" height="3" fill="#fbfaf6"/>
<rect x="3" y="628" width="836.5" height="25.4" fill="#ece9d8"/>
<text x="8.3" y="647.8" font-size="14.8" fill="#000">Ready</text>
<rect x="382.8" y="632.6" width="46.2" height="19.6" fill="none" stroke="#d2d0c4" stroke-width="1.5"/>
<rect x="431.6" y="632.6" width="154.4" height="19.6" fill="none" stroke="#d2d0c4" stroke-width="1.5"/>
<rect x="588.2" y="632.6" width="33.5" height="19.6" fill="none" stroke="#d2d0c4" stroke-width="1.5"/>
<rect x="624.5" y="632.6" width="40.8" height="19.6" fill="none" stroke="#d2d0c4" stroke-width="1.5"/>
<rect x="667.8" y="632.6" width="34.5" height="19.6" fill="none" stroke="#d2d0c4" stroke-width="1.5"/>
<rect x="704.8" y="632.6" width="38.9" height="19.6" fill="none" stroke="#d2d0c4" stroke-width="1.5"/>
<rect x="746.2" y="632.6" width="33.5" height="19.6" fill="none" stroke="#d2d0c4" stroke-width="1.5"/>
<rect x="782.3" y="632.6" width="26.6" height="19.6" fill="none" stroke="#d2d0c4" stroke-width="1.5"/>
<text x="669" y="648.6" font-size="13.6" fill="#000">NUM</text>
<rect x="835.3" y="639.5" width="2.4" height="2.4" fill="#fff"/><rect x="834.3" y="638.5" width="2.4" height="2.4" fill="#b5b2a0"/>
<rect x="829.8" y="645" width="2.4" height="2.4" fill="#fff"/><rect x="828.8" y="644" width="2.4" height="2.4" fill="#b5b2a0"/>
<rect x="835.3" y="645" width="2.4" height="2.4" fill="#fff"/><rect x="834.3" y="644" width="2.4" height="2.4" fill="#b5b2a0"/>
<rect x="824.3" y="650.5" width="2.4" height="2.4" fill="#fff"/><rect x="823.3" y="649.5" width="2.4" height="2.4" fill="#b5b2a0"/>
<rect x="829.8" y="650.5" width="2.4" height="2.4" fill="#fff"/><rect x="828.8" y="649.5" width="2.4" height="2.4" fill="#b5b2a0"/>
<rect x="835.3" y="650.5" width="2.4" height="2.4" fill="#fff"/><rect x="834.3" y="649.5" width="2.4" height="2.4" fill="#b5b2a0"/>
<rect x="836.6" y="134.8" width="2.8" height="468.5" fill="#fbfaf6"/>
<rect x="839.3" y="41" width="2.7" height="612.4" fill="#7d92e2"/>
</g>
</svg></body></html>
